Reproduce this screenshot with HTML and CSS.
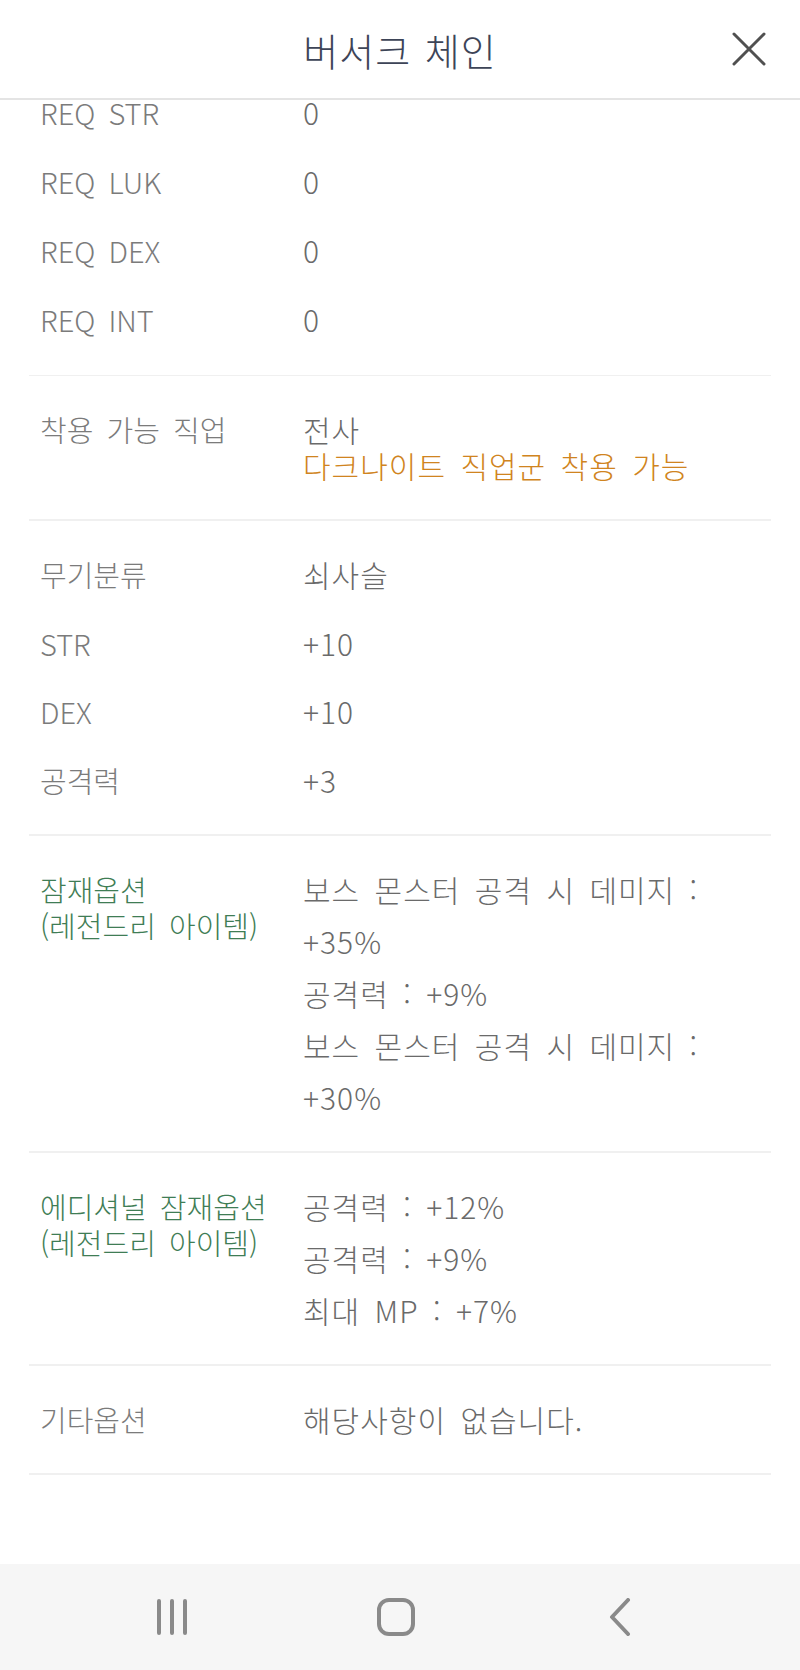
FILE: index.html
```html
<!DOCTYPE html>
<html lang="ko">
<head>
    <meta charset="UTF-8">
    <meta name="viewport" content="width=device-width, initial-scale=1.0">
    <title>버서크 체인</title>
    <link rel="stylesheet" href="styles.css">
</head>
<body>
    <header class="topbar">
        <h1 class="topbar-title">버서크 체인</h1>
        <button class="close-btn" aria-label="닫기">
            <svg width="34" height="34" viewBox="0 0 34 34">
                <path d="M2 2 L32 32 M32 2 L2 32" stroke="#505050" stroke-width="3" stroke-linecap="round" fill="none"/>
            </svg>
        </button>
    </header>

    <main class="detail">
        <!-- Required stats -->
        <section class="group group-first">
            <div class="row"><span class="label">REQ STR</span><span class="value">0</span></div>
            <div class="row"><span class="label">REQ LUK</span><span class="value">0</span></div>
            <div class="row"><span class="label">REQ DEX</span><span class="value">0</span></div>
            <div class="row"><span class="label">REQ INT</span><span class="value">0</span></div>
        </section>

        <!-- Job -->
        <section class="group">
            <div class="row">
                <span class="label">착용 가능 직업</span>
                <span class="value">전사<br><em class="note">다크나이트 직업군 착용 가능</em></span>
            </div>
        </section>

        <!-- Base stats -->
        <section class="group group-stats">
            <div class="row"><span class="label">무기분류</span><span class="value">쇠사슬</span></div>
            <div class="row"><span class="label">STR</span><span class="value">+10</span></div>
            <div class="row"><span class="label">DEX</span><span class="value">+10</span></div>
            <div class="row"><span class="label">공격력</span><span class="value">+3</span></div>
        </section>

        <!-- Potential -->
        <section class="group">
            <div class="row">
                <span class="label label-legend">잠재옵션<br>(레전드리 아이템)</span>
                <ul class="value option-list">
                    <li>보스 몬스터 공격 시 데미지 : +35%</li>
                    <li>공격력 : +9%</li>
                    <li>보스 몬스터 공격 시 데미지 : +30%</li>
                </ul>
            </div>
        </section>

        <!-- Additional potential -->
        <section class="group">
            <div class="row">
                <span class="label label-legend">에디셔널 잠재옵션<br>(레전드리 아이템)</span>
                <ul class="value option-list">
                    <li>공격력 : +12%</li>
                    <li>공격력 : +9%</li>
                    <li>최대 MP : +7%</li>
                </ul>
            </div>
        </section>

        <!-- Etc -->
        <section class="group">
            <div class="row"><span class="label">기타옵션</span><span class="value">해당사항이 없습니다.</span></div>
        </section>
    </main>

    <nav class="navbar">
        <button class="nav-btn" aria-label="최근 앱">
            <svg width="34" height="36" viewBox="0 0 34 36">
                <path d="M4 2 V34 M17 2 V34 M30 2 V34" stroke="#8a8a8a" stroke-width="4" stroke-linecap="round"/>
            </svg>
        </button>
        <button class="nav-btn" aria-label="홈">
            <svg width="38" height="38" viewBox="0 0 38 38">
                <rect x="2" y="2" width="34" height="34" rx="10" stroke="#8a8a8a" stroke-width="4" fill="none"/>
            </svg>
        </button>
        <button class="nav-btn" aria-label="뒤로">
            <svg width="24" height="38" viewBox="0 0 24 38">
                <path d="M20 2 L4 19 L20 36" stroke="#8a8a8a" stroke-width="4" stroke-linecap="round" stroke-linejoin="round" fill="none"/>
            </svg>
        </button>
    </nav>
</body>
</html>
```

FILE: styles.css
```css
body {
    margin: 0;
    min-height: 1670px;
    display: flex;
    flex-direction: column;
    background: #fff;
    font-family: "Noto Sans CJK KR", "Noto Sans", sans-serif;
    font-weight: 300;
    font-size: 29px;
    word-spacing: 5px;
    color: #6a6a6a;
}
.topbar {
    position: sticky;
    top: 0;
    z-index: 2;
    display: grid;
    grid-template-columns: 1fr auto 1fr;
    align-items: center;
    height: 98px;
    padding: 0 34px;
    background: #fff;
    border-bottom: 2px solid #e4e4e4;
}
.topbar-title {
    grid-column: 2;
    margin: 0;
    font-size: 38px;
    font-weight: 300;
    letter-spacing: 1px;
    word-spacing: 2px;
    color: #3d4457;
}
.close-btn {
    grid-column: 3;
    justify-self: end;
    display: flex;
    padding: 0;
    border: none;
    background: none;
}
.detail {
    flex: 1;
}
.group {
    margin: 0 29px;
    padding: 35px 0 36px 11px;
    border-bottom: 2px solid #f0f0f0;
    display: flex;
    flex-direction: column;
    gap: 32px;
}
.group-first {
    margin-top: -6px;
    padding-top: 0;
    padding-bottom: 38px;
    gap: 33px;
    border-bottom-width: 1px;
}
.group-stats {
    gap: 32.5px;
}
.row {
    display: grid;
    grid-template-columns: 263px 440px;
    line-height: 36px;
}
.label {
    color: #7b7b7b;
}
.label-legend {
    color: #3f7d55;
}
.value {
    font-size: 30px;
    letter-spacing: 1px;
    color: #6a6a6a;
}
.note {
    font-style: normal;
    color: #d08420;
}
.option-list {
    list-style: none;
    margin: -8px 0;
    padding: 0;
    line-height: 52px;
}
.navbar {
    display: grid;
    grid-template-columns: repeat(3, 1fr);
    justify-items: center;
    align-items: center;
    height: 106px;
    padding: 0 68px 0 60px;
    background: #f6f6f6;
}
.nav-btn {
    display: flex;
    padding: 0;
    border: none;
    background: none;
}
```
